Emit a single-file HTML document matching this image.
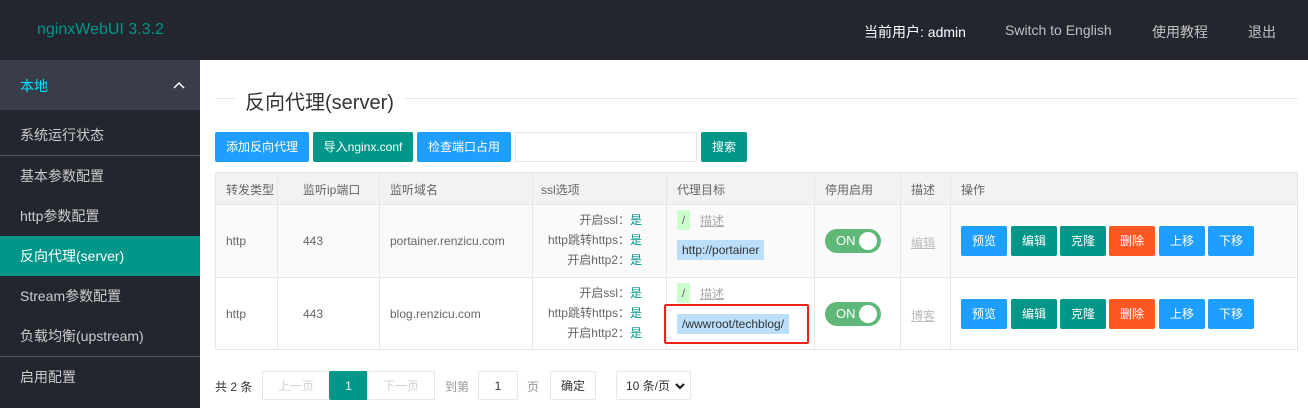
<!DOCTYPE html>
<html><head><meta charset="utf-8"><style>
*{margin:0;padding:0;box-sizing:border-box}
body{width:1308px;height:408px;overflow:hidden;background:#fff;font-family:"Liberation Sans","Noto Sans CJK SC",sans-serif;font-size:13px;color:#666;position:relative}
.a{position:absolute}
.hdr{left:0;top:0;width:1308px;height:60px;background:#23262e}
.side{left:0;top:60px;width:200px;height:348px;background:#23262e}
.si{position:absolute;left:0;width:200px;height:40px;line-height:40px;padding-left:20px;color:#ccc;font-size:14px}
.btn{position:absolute;height:30px;line-height:30px;color:#fff;text-align:center;border-radius:2px;font-size:12px}
.b{background:#1e9fff}.g{background:#009688}.r{background:#ff5722}
.hl{position:absolute;background:#e6e6e6}
.c{position:absolute;font-size:12px;color:#666}
.tog{position:absolute;width:56px;height:24px;border-radius:12px;background:#5fb878;color:#fff;font-size:13px;line-height:24px;padding-left:11px}
.tog:after{content:"";position:absolute;right:4px;top:3px;width:18px;height:18px;border-radius:50%;background:#fff}
.pg{position:absolute;top:371px;height:29px;line-height:29px;border:1px solid #e6e6e6;text-align:center;font-size:12px}
</style></head><body>
<div class="a hdr"></div>
<div class="a" style="left:37px;top:21px;color:#009688;font-size:16px">nginxWebUI 3.3.2</div>
<div class="a" style="left:864px;top:22px;color:#fff;font-size:14px">当前用户: admin</div>
<div class="a" style="left:1005px;top:22px;color:#c2c2c2;font-size:14px">Switch to English</div>
<div class="a" style="left:1152px;top:22px;color:#c2c2c2;font-size:14px">使用教程</div>
<div class="a" style="left:1248px;top:22px;color:#c2c2c2;font-size:14px">退出</div>
<div class="a side"></div>
<div class="a" style="left:0;top:60px;width:200px;height:50px;background:#393d49"></div>
<div class="a" style="left:20px;top:76px;color:#00e5ff;font-size:14px">本地</div>
<svg class="a" style="left:173px;top:81px" width="12" height="8"><path d="M1 7L6 2L11 7" stroke="#fff" stroke-width="1.5" fill="none"/></svg>
<div class="si" style="top:115px">系统运行状态</div>
<div class="a" style="left:0;top:155px;width:200px;height:1px;background:#555"></div>
<div class="si" style="top:156px">基本参数配置</div>
<div class="si" style="top:196px">http参数配置</div>
<div class="si" style="top:236px;background:#009688;color:#fff">反向代理(server)</div>
<div class="si" style="top:276px">Stream参数配置</div>
<div class="si" style="top:316px">负载均衡(upstream)</div>
<div class="a" style="left:0;top:356px;width:200px;height:1px;background:#555"></div>
<div class="si" style="top:357px">启用配置</div>

<div class="hl" style="left:215px;top:98px;width:20px;height:1px"></div>
<div class="hl" style="left:405px;top:98px;width:893px;height:1px"></div>
<div class="a" style="left:245px;top:86px;font-size:20px;color:#333">反向代理(server)</div>

<div class="btn b" style="left:215px;top:132px;width:94px">添加反向代理</div>
<div class="btn g" style="left:313px;top:132px;width:100px">导入nginx.conf</div>
<div class="btn b" style="left:417px;top:132px;width:94px">检查端口占用</div>
<div class="a" style="left:515px;top:132px;width:182px;height:30px;border:1px solid #e6e6e6"></div>
<div class="btn g" style="left:701px;top:132px;width:46px">搜索</div>

<div class="a" style="left:215px;top:172px;width:1083px;height:32px;background:#f2f2f2"></div>
<div class="a" style="left:215px;top:204px;width:1083px;height:73px;background:#fafafa"></div>
<div class="a" style="left:215px;top:172px;width:1083px;height:178px;border:1px solid #e6e6e6"></div>
<div class="hl" style="left:215px;top:204px;width:1083px;height:1px"></div>
<div class="hl" style="left:215px;top:277px;width:1083px;height:1px"></div>
<div class="hl" style="left:277px;top:172px;width:1px;height:178px"></div>
<div class="hl" style="left:379px;top:172px;width:1px;height:178px"></div>
<div class="hl" style="left:532px;top:172px;width:1px;height:178px"></div>
<div class="hl" style="left:666px;top:172px;width:1px;height:178px"></div>
<div class="hl" style="left:814px;top:172px;width:1px;height:178px"></div>
<div class="hl" style="left:900px;top:172px;width:1px;height:178px"></div>
<div class="hl" style="left:950px;top:172px;width:1px;height:178px"></div>

<div class="c" style="left:226px;top:181px">转发类型</div>
<div class="c" style="left:303px;top:181px">监听ip端口</div>
<div class="c" style="left:390px;top:181px">监听域名</div>
<div class="c" style="left:541px;top:181px">ssl选项</div>
<div class="c" style="left:677px;top:181px">代理目标</div>
<div class="c" style="left:825px;top:181px">停用启用</div>
<div class="c" style="left:911px;top:181px">描述</div>
<div class="c" style="left:961px;top:181px">操作</div>

<div class="c" style="left:226px;top:234px">http</div>
<div class="c" style="left:303px;top:234px">443</div>
<div class="c" style="left:390px;top:234px">portainer.renzicu.com</div>
<div class="c" style="left:532px;top:210px;width:110px;text-align:right;line-height:20px">开启ssl：<span style="color:#009688">是</span><br>http跳转https：<span style="color:#009688">是</span><br>开启http2：<span style="color:#009688">是</span></div>
<div class="c" style="left:677px;top:210px;width:13px;height:20px;background:#cfc;line-height:20px;text-align:center">/</div>
<div class="c" style="left:700px;top:212px;color:#aaa;text-decoration:underline">描述</div>
<div class="c" style="left:677px;top:240px;height:20px;line-height:20px;background:#bbdefb;padding:0 5px;color:#333">http://portainer</div>
<div class="tog" style="left:825px;top:229px">ON</div>
<div class="c" style="left:911px;top:234px;color:#bbb;text-decoration:underline">编辑</div>

<div class="c" style="left:226px;top:307px">http</div>
<div class="c" style="left:303px;top:307px">443</div>
<div class="c" style="left:390px;top:307px">blog.renzicu.com</div>
<div class="c" style="left:532px;top:283px;width:110px;text-align:right;line-height:20px">开启ssl：<span style="color:#009688">是</span><br>http跳转https：<span style="color:#009688">是</span><br>开启http2：<span style="color:#009688">是</span></div>
<div class="c" style="left:677px;top:283px;width:13px;height:20px;background:#cfc;line-height:20px;text-align:center">/</div>
<div class="c" style="left:700px;top:285px;color:#aaa;text-decoration:underline">描述</div>
<div class="a" style="left:664px;top:304px;width:145px;height:40px;border:2px solid #f0201a;border-radius:2px"></div>
<div class="c" style="left:677px;top:314px;height:20px;line-height:20px;background:#bbdefb;padding:0 5px;color:#333">/wwwroot/techblog/</div>
<div class="tog" style="left:825px;top:302px">ON</div>
<div class="c" style="left:911px;top:307px;color:#bbb;text-decoration:underline">博客</div>

<div class="btn b" style="left:961px;top:226px;width:46px">预览</div>
<div class="btn g" style="left:1011px;top:226px;width:46px">编辑</div>
<div class="btn g" style="left:1060px;top:226px;width:46px">克隆</div>
<div class="btn r" style="left:1109px;top:226px;width:46px">删除</div>
<div class="btn b" style="left:1159px;top:226px;width:46px">上移</div>
<div class="btn b" style="left:1208px;top:226px;width:46px">下移</div>
<div class="btn b" style="left:961px;top:299px;width:46px">预览</div>
<div class="btn g" style="left:1011px;top:299px;width:46px">编辑</div>
<div class="btn g" style="left:1060px;top:299px;width:46px">克隆</div>
<div class="btn r" style="left:1109px;top:299px;width:46px">删除</div>
<div class="btn b" style="left:1159px;top:299px;width:46px">上移</div>
<div class="btn b" style="left:1208px;top:299px;width:46px">下移</div>

<div class="c" style="left:215px;top:378px;color:#333">共 2 条</div>
<div class="pg" style="left:262px;width:68px;color:#d2d2d2">上一页</div>
<div class="pg" style="left:329px;width:39px;background:#009688;border-color:#009688;color:#fff;border-radius:2px">1</div>
<div class="pg" style="left:367px;width:68px;color:#d2d2d2">下一页</div>
<div class="c" style="left:445px;top:378px;color:#999">到第</div>
<div class="pg" style="left:478px;width:40px;color:#333;border-radius:2px">1</div>
<div class="c" style="left:527px;top:378px;color:#999">页</div>
<div class="pg" style="left:550px;width:46px;color:#333;border-radius:2px">确定</div>
<div class="pg" style="left:616px;width:75px;color:#333;text-align:left;padding-left:9px;border-radius:2px">10 条/页</div>
<svg class="a" style="left:675px;top:382px" width="10" height="8"><path d="M1 2L5 6L9 2" stroke="#111" stroke-width="2" fill="none"/></svg>
</body></html>
